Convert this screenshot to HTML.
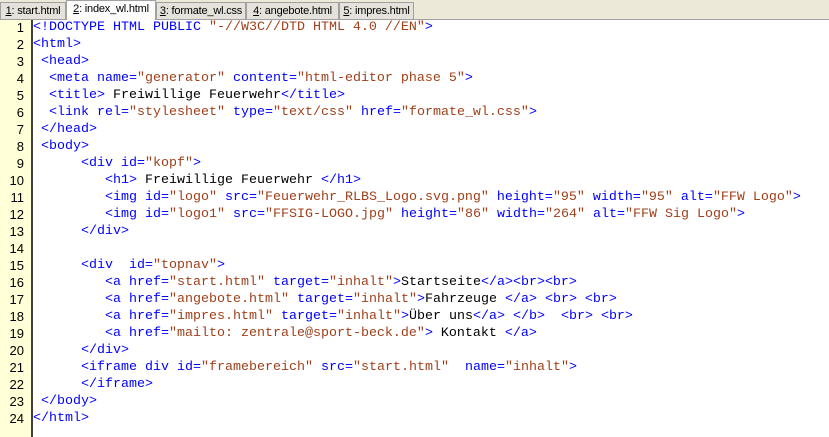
<!DOCTYPE html>
<html><head><style>
body{margin:0;width:829px;height:437px;background:#fff;overflow:hidden;font-family:"Liberation Mono",monospace;}
#tabs{position:absolute;left:0;top:0;width:829px;height:19px;background:#ece9d8;border-bottom:1px solid #a0a0a0;}
.tab{position:absolute;top:2px;height:17px;background:#e4e2da;border:1px solid #a0a0a0;border-bottom:none;font:11px "Liberation Sans",sans-serif;color:#000;line-height:16px;text-align:center;box-sizing:border-box;white-space:nowrap;overflow:hidden;letter-spacing:-0.2px;}
.tab.a{top:0;height:20px;background:#fcfcfc;line-height:17px;}
#gut{position:absolute;left:0;top:20px;width:31px;height:417px;background:#ffffd8;border-right:2px solid #404040;}
#code{position:absolute;left:0;top:19px;}
.l{height:17px;line-height:17px;font-size:13.33px;white-space:pre;position:relative;}
.n{position:absolute;left:0;width:24px;text-align:right;color:#000;font-family:"Liberation Sans",sans-serif;font-size:13px;}
.c{position:absolute;left:33px;color:#000;}
b{font-weight:normal;color:#0000ff}
i{font-style:normal;color:#a0401a}
</style></head><body>
<div id="tabs">
<div class="tab" style="left:0;width:66px"><u>1</u>: start.html</div>
<div class="tab a" style="left:66px;width:90px"><u>2</u>: index_wl.html</div>
<div class="tab" style="left:156px;width:90px"><u>3</u>: formate_wl.css</div>
<div class="tab" style="left:246px;width:93px"><u>4</u>: angebote.html</div>
<div class="tab" style="left:339px;width:75px"><u>5</u>: impres.html</div>
</div>
<div id="gut"></div>
<div id="code">
<div class="l"><span class="n">1</span><span class="c"><b>&lt;!DOCTYPE HTML PUBLIC </b><i>"-//W3C//DTD HTML 4.0 //EN"</i><b>&gt;</b></span></div>
<div class="l"><span class="n">2</span><span class="c"><b>&lt;html&gt;</b></span></div>
<div class="l"><span class="n">3</span><span class="c"> <b>&lt;head&gt;</b></span></div>
<div class="l"><span class="n">4</span><span class="c">  <b>&lt;meta name=</b><i>"generator"</i><b> content=</b><i>"html-editor phase 5"</i><b>&gt;</b></span></div>
<div class="l"><span class="n">5</span><span class="c">  <b>&lt;title&gt;</b> Freiwillige Feuerwehr<b>&lt;/title&gt;</b></span></div>
<div class="l"><span class="n">6</span><span class="c">  <b>&lt;link rel=</b><i>"stylesheet"</i><b> type=</b><i>"text/css"</i><b> href=</b><i>"formate_wl.css"</i><b>&gt;</b></span></div>
<div class="l"><span class="n">7</span><span class="c"> <b>&lt;/head&gt;</b></span></div>
<div class="l"><span class="n">8</span><span class="c"> <b>&lt;body&gt;</b></span></div>
<div class="l"><span class="n">9</span><span class="c">      <b>&lt;div id=</b><i>"kopf"</i><b>&gt;</b></span></div>
<div class="l"><span class="n">10</span><span class="c">         <b>&lt;h1&gt;</b> Freiwillige Feuerwehr <b>&lt;/h1&gt;</b></span></div>
<div class="l"><span class="n">11</span><span class="c">         <b>&lt;img id=</b><i>"logo"</i><b> src=</b><i>"Feuerwehr_RLBS_Logo.svg.png"</i><b> height=</b><i>"95"</i><b> width=</b><i>"95"</i><b> alt=</b><i>"FFW Logo"</i><b>&gt;</b></span></div>
<div class="l"><span class="n">12</span><span class="c">         <b>&lt;img id=</b><i>"logo1"</i><b> src=</b><i>"FFSIG-LOGO.jpg"</i><b> height=</b><i>"86"</i><b> width=</b><i>"264"</i><b> alt=</b><i>"FFW Sig Logo"</i><b>&gt;</b></span></div>
<div class="l"><span class="n">13</span><span class="c">      <b>&lt;/div&gt;</b></span></div>
<div class="l"><span class="n">14</span><span class="c"></span></div>
<div class="l"><span class="n">15</span><span class="c">      <b>&lt;div  id=</b><i>"topnav"</i><b>&gt;</b></span></div>
<div class="l"><span class="n">16</span><span class="c">         <b>&lt;a href=</b><i>"start.html"</i><b> target=</b><i>"inhalt"</i><b>&gt;</b>Startseite<b>&lt;/a&gt;&lt;br&gt;&lt;br&gt;</b></span></div>
<div class="l"><span class="n">17</span><span class="c">         <b>&lt;a href=</b><i>"angebote.html"</i><b> target=</b><i>"inhalt"</i><b>&gt;</b>Fahrzeuge <b>&lt;/a&gt; &lt;br&gt; &lt;br&gt;</b></span></div>
<div class="l"><span class="n">18</span><span class="c">         <b>&lt;a href=</b><i>"impres.html"</i><b> target=</b><i>"inhalt"</i><b>&gt;</b>Über uns<b>&lt;/a&gt; &lt;/b&gt;  &lt;br&gt; &lt;br&gt;</b></span></div>
<div class="l"><span class="n">19</span><span class="c">         <b>&lt;a href=</b><i>"mailto: zentrale@sport-beck.de"</i><b>&gt;</b> Kontakt <b>&lt;/a&gt;</b></span></div>
<div class="l"><span class="n">20</span><span class="c">      <b>&lt;/div&gt;</b></span></div>
<div class="l"><span class="n">21</span><span class="c">      <b>&lt;iframe div id=</b><i>"framebereich"</i><b> src=</b><i>"start.html"</i><b>  name=</b><i>"inhalt"</i><b>&gt;</b></span></div>
<div class="l"><span class="n">22</span><span class="c">      <b>&lt;/iframe&gt;</b></span></div>
<div class="l"><span class="n">23</span><span class="c"> <b>&lt;/body&gt;</b></span></div>
<div class="l"><span class="n">24</span><span class="c"><b>&lt;/html&gt;</b></span></div>
</div>
</body></html>
